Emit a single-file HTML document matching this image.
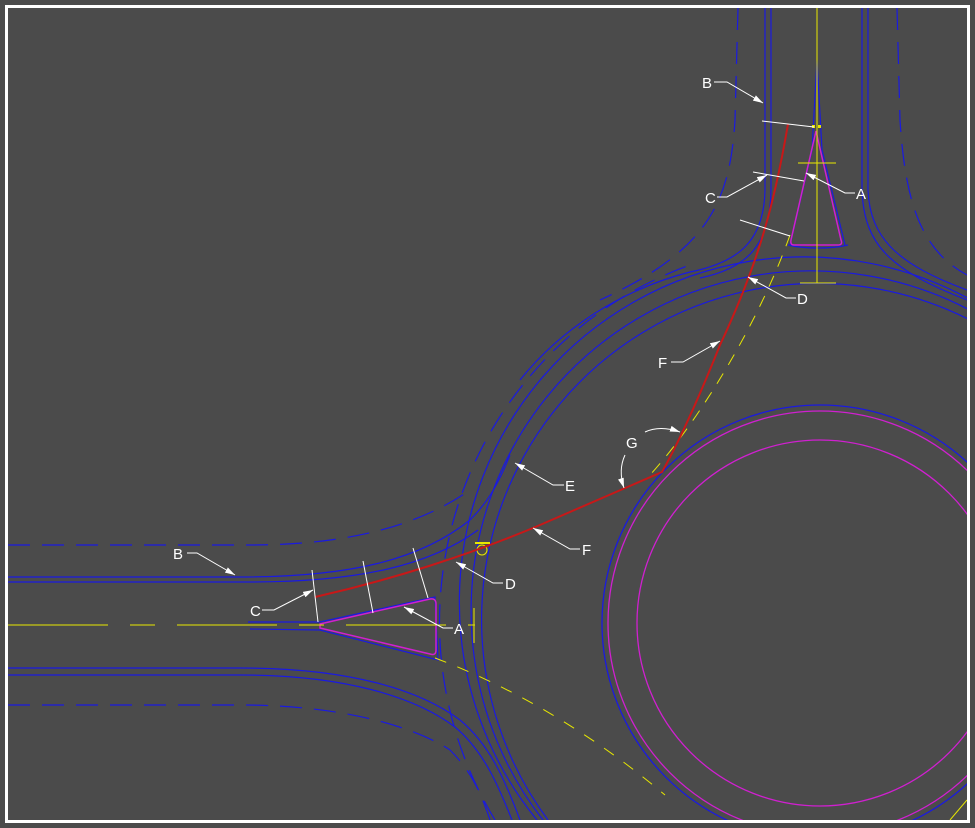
<!DOCTYPE html>
<html><head><meta charset="utf-8"><style>
html,body{margin:0;padding:0;background:#4b4b4b}
svg{display:block}
text{font-family:"Liberation Sans",sans-serif;font-size:15px;fill:#fff}
</style></head><body>
<svg width="975" height="828" viewBox="0 0 975 828" xmlns="http://www.w3.org/2000/svg">
<rect width="975" height="828" fill="#4b4b4b"/>
<defs><clipPath id="c"><rect x="8" y="8" width="959" height="812"/></clipPath>
<marker id="ar" viewBox="0 0 10 6" refX="10" refY="3" markerWidth="10" markerHeight="6" orient="auto" markerUnits="userSpaceOnUse"><path d="M0,0L10,3L0,6z" fill="#fff"/></marker></defs>
<g clip-path="url(#c)" fill="none">
<circle cx="820" cy="623" r="218" stroke="#1a1ae0" stroke-width="1.3"/>
<circle cx="820" cy="623" r="212" stroke="#d020d0" stroke-width="1.3"/>
<circle cx="820" cy="623" r="183" stroke="#d020d0" stroke-width="1.3"/>
<g stroke="#1a1ae0" stroke-width="1.2">
<path d="M548,820 A336,336 0 0 1 970,320"/>
<path d="M543,820 A340,340 0 0 1 975,313"/>
<path d="M537,820 A345,345 0 0 1 980,305"/>
<path d="M495,820 A380,380 0 0 1 690,265" stroke-dasharray="22,12"/>
<path d="M765,8 L765,190 C764,240 740,262 690,272 C620,290 560,330 520,380"/>
<path d="M771,8 L771,190 C770,245 748,268 700,278"/>
<path d="M738,8 L735,120 C730,200 710,250 600,300" stroke-dasharray="22,12"/>
<path d="M862,8 L862,190 C864,245 890,270 967,300"/>
<path d="M868,8 L868,190 C870,240 900,265 967,290"/>
<path d="M897,8 L900,120 C905,200 920,250 967,275" stroke-dasharray="22,12"/>
<path d="M788,245 Q800,248 818,248 Q836,248 848,245"/>
<path d="M790,245 L812,150 L817,60 L822,150 L845,245"/>
<path d="M8,577 L240,577 C350,577 420,560 470,520 C490,500 500,480 510,455"/>
<path d="M8,582 L250,582 C360,582 430,565 478,530"/>
<path d="M8,545 L250,545 C350,545 420,525 470,490" stroke-dasharray="22,12"/>
<path d="M8,668 L240,668 C350,668 420,690 460,720 C490,745 505,780 520,820"/>
<path d="M8,675 L240,675 C345,675 415,697 455,727 C485,752 500,790 512,820"/>
<path d="M8,705 L240,705 C350,705 420,730 450,750 C470,770 480,790 490,820" stroke-dasharray="22,12"/>
<path d="M248,622 L320,622 L435,597 L438,660 L320,630 L250,629"/>
</g>
<path d="M816,131 L841,240 Q843,245 838,245 L794,245 Q790,245 791,240 Z" stroke="#d020d0" stroke-width="1.5"/>
<path d="M320,624 L430,599 Q436,598 436,604 L436,650 Q436,656 430,654 L320,628 Z" stroke="#d020d0" stroke-width="1.5"/>
<g stroke="#e8e800" stroke-width="1">
<line x1="817" y1="8" x2="817" y2="283"/>
<line x1="798" y1="163" x2="836" y2="163"/>
<line x1="800" y1="283" x2="836" y2="283"/>
<path d="M8,625 L475,625" stroke-dasharray="100,22,25,22"/>
<line x1="474" y1="608" x2="474" y2="643"/>
<path d="M790,235 C760,320 700,420 650,475" stroke-dasharray="12,10"/>
<path d="M435,658 C520,690 600,740 665,795" stroke-dasharray="12,12"/>
<path d="M950,820 L967,800" />
<circle cx="482" cy="550" r="5"/>
<line x1="475" y1="543" x2="490" y2="543" stroke-width="2"/>
</g>
<rect x="812" y="125" width="3" height="3" fill="#e8e800"/><rect x="818" y="125" width="3" height="3" fill="#e8e800"/>
<path d="M788,124 C775,200 760,260 720,345 C700,395 680,440 662,472 L540,525 C470,555 390,580 315,597" stroke="#c81818" stroke-width="2"/>
<g stroke="#fff" stroke-width="1">
<line x1="762" y1="121" x2="814" y2="127"/>
<line x1="753" y1="172" x2="804" y2="181"/>
<line x1="740" y1="220" x2="790" y2="236"/>
<line x1="312" y1="570" x2="318" y2="622"/>
<line x1="363" y1="561" x2="373" y2="613"/>
<line x1="413" y1="548" x2="428" y2="598"/>
</g>
</g>
<g stroke="#fff" stroke-width="1" fill="none">
<path d="M714,82 L727,82 L763,103" marker-end="url(#ar)"/>
<path d="M717,197 L727,197 L767,175" marker-end="url(#ar)"/>
<path d="M855,193 L845,193 L806,173" marker-end="url(#ar)"/>
<path d="M796,298 L786,298 L748,277" marker-end="url(#ar)"/>
<path d="M671,362 L683,362 L720,341" marker-end="url(#ar)"/>
<path d="M645,432 Q660,425 680,432" marker-end="url(#ar)"/>
<path d="M625,455 Q618,470 624,488" marker-end="url(#ar)"/>
<path d="M564,485 L553,485 L515,463" marker-end="url(#ar)"/>
<path d="M580,549 L570,549 L533,528" marker-end="url(#ar)"/>
<path d="M503,583 L493,583 L456,562" marker-end="url(#ar)"/>
<path d="M453,628 L443,628 L404,607" marker-end="url(#ar)"/>
<path d="M187,553 L197,553 L235,575" marker-end="url(#ar)"/>
<path d="M262,610 L274,610 L313,590" marker-end="url(#ar)"/>
</g>
<text x="702" y="88">B</text>
<text x="705" y="203">C</text>
<text x="856" y="199">A</text>
<text x="797" y="304">D</text>
<text x="658" y="368">F</text>
<text x="626" y="448">G</text>
<text x="565" y="491">E</text>
<text x="582" y="555">F</text>
<text x="505" y="589">D</text>
<text x="454" y="634">A</text>
<text x="173" y="559">B</text>
<text x="250" y="616">C</text>
<rect x="6.5" y="6.5" width="962" height="815" fill="none" stroke="#fff" stroke-width="3"/>
</svg>
</body></html>
